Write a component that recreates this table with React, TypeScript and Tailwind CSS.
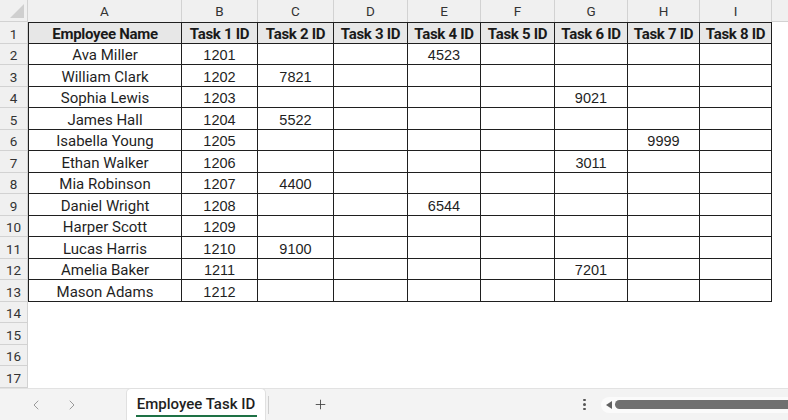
import { ChevronLeft, ChevronRight, Plus } from "lucide-react";

const cols = ["A", "B", "C", "D", "E", "F", "G", "H", "I"];
const headers = ["Employee Name", "Task 1 ID", "Task 2 ID", "Task 3 ID", "Task 4 ID", "Task 5 ID", "Task 6 ID", "Task 7 ID", "Task 8 ID"];

const rows: { name: string; id: string; extra?: [number, string] }[] = [
  { name: "Ava Miller", id: "1201", extra: [4, "4523"] },
  { name: "William Clark", id: "1202", extra: [2, "7821"] },
  { name: "Sophia Lewis", id: "1203", extra: [6, "9021"] },
  { name: "James Hall", id: "1204", extra: [2, "5522"] },
  { name: "Isabella Young", id: "1205", extra: [7, "9999"] },
  { name: "Ethan Walker", id: "1206", extra: [6, "3011"] },
  { name: "Mia Robinson", id: "1207", extra: [2, "4400"] },
  { name: "Daniel Wright", id: "1208", extra: [4, "6544"] },
  { name: "Harper Scott", id: "1209" },
  { name: "Lucas Harris", id: "1210", extra: [2, "9100"] },
  { name: "Amelia Baker", id: "1211", extra: [6, "7201"] },
  { name: "Mason Adams", id: "1212" },
];

const rowHead = "flex items-end justify-center bg-[#f0f0f0] border-r border-b border-[#d2d2d2] text-[13.5px] leading-[18px] text-[#333]";

export default function App() {
  return (
    <div className="w-[788px] h-[420px] overflow-hidden bg-white flex flex-col font-['Roboto',sans-serif]">
      <div className="grid grid-cols-[28px_154px_76px_76px_74px_73px_74px_73px_72px_72px_1fr] grid-rows-[22px_repeat(17,21.53px)] h-[388px]">
        {/* corner */}
        <div className="relative bg-[#f0f0f0] border-r border-b border-[#d2d2d2]">
          <div className="absolute right-[3px] bottom-[3px] w-0 h-0 border-l-[14px] border-l-transparent border-b-[14px] border-b-[#cfcfcf]" />
        </div>
        {cols.map((c) => (
          <div key={c} className="flex items-end pb-[2px] justify-center bg-[#f0f0f0] border-r border-[#d2d2d2] text-[13.5px] leading-[18px] text-[#333]">
            {c}
          </div>
        ))}
        <div className="bg-[#f0f0f0] border-b border-[#d2d2d2]" />

        {/* row 1 */}
        <div className={rowHead}>1</div>
        {headers.map((h, i) => (
          <div
            key={h}
            className={`flex items-end justify-center bg-[#e7e7e7] border-t border-r border-b border-[#1f1f1f] text-[15px] leading-[18px] font-bold text-[#1a1a1a] tracking-[-0.3px] ${i === 0 ? "border-l" : ""}`}
          >
            {h}
          </div>
        ))}
        <div />

        {rows.map((r, ri) => (
          <>
            <div key={`h${ri}`} className={rowHead}>{ri + 2}</div>
            {cols.map((c, ci) => {
              let v = "";
              if (ci === 0) v = r.name;
              else if (ci === 1) v = r.id;
              else if (r.extra && r.extra[0] === ci) v = r.extra[1];
              return (
                <div
                  key={`${ri}${c}`}
                  className={`flex items-end justify-center border-r border-b border-[#1f1f1f] text-[#1f1f1f] leading-[18px] ${ci === 0 ? "border-l text-[15px]" : "text-[14.5px] font-['Liberation_Sans',sans-serif]"}`}
                >
                  {v}
                </div>
              );
            })}
            <div key={`e${ri}`} />
          </>
        ))}

        {[14, 15, 16, 17].map((n) => (
          <>
            <div key={`r${n}`} className={rowHead}>{n}</div>
            <div key={`s${n}`} className="col-span-10" />
          </>
        ))}
      </div>

      {/* sheet tabs bar */}
      <div className="flex-1 flex items-stretch bg-[#f3f3f3] border-t border-[#e2e2e2]">
        <div className="w-[126px] flex items-center pl-[28px] gap-[20px] text-[#9a9a9a]">
          <ChevronLeft className="w-4 h-4" strokeWidth={1.5} />
          <ChevronRight className="w-4 h-4" strokeWidth={1.5} />
        </div>
        <div className="-mt-px w-[140px] bg-white rounded-t-[5px] border border-b-0 border-[#e0e0e0] flex flex-col items-center justify-center">
          <div className="text-[15px] font-medium text-[#1f1f1f] leading-[18px] mt-[2px]">Employee Task ID</div>
          <div className="w-[121px] h-[2px] bg-[#1e7145] mt-[2px]" />
        </div>
        <div className="flex items-center pl-[2px]">
          <div className="w-px h-[18px] bg-[#cfcfcf]" />
        </div>
        <div className="flex items-center pl-[44px]">
          <Plus className="w-[15px] h-[15px] text-[#444]" strokeWidth={1.4} />
        </div>
        <div className="flex items-center pl-[255px]">
          <div className="flex flex-col gap-[2px]">
            <div className="w-[2.5px] h-[2.5px] rounded-full bg-[#555]" />
            <div className="w-[2.5px] h-[2.5px] rounded-full bg-[#555]" />
            <div className="w-[2.5px] h-[2.5px] rounded-full bg-[#555]" />
          </div>
        </div>
        <div className="flex items-center pl-[15px] flex-1">
          <div className="h-[16px] flex-1 bg-[#fbfbfb] rounded-l-full flex items-center pl-[5px] gap-[3px]">
            <div className="w-0 h-0 border-t-[4px] border-t-transparent border-b-[4px] border-b-transparent border-r-[6px] border-r-[#606060]" />
            <div className="flex-1 h-[9px] bg-[#707070] rounded-l-full" />
          </div>
        </div>
      </div>
    </div>
  );
}
